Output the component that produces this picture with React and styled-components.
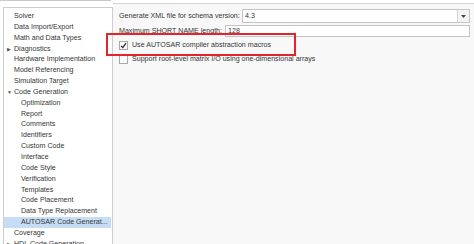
import React from "react";
import styled, { createGlobalStyle } from "styled-components";

const Global = createGlobalStyle`
  html, body { margin: 0; padding: 0; background: #ffffff; }
  body { font-family: "Liberation Sans", Arial, sans-serif; font-size: 7.1px; color: #363636; }
  * { box-sizing: border-box; }
`;

const Page = styled.div`
  position: relative;
  display: flex;
  width: 474px;
  height: 244px;
  overflow: hidden;
`;

const Sidebar = styled.div`
  width: 113px;
  flex: none;
  display: flex;
  flex-direction: column;
`;

const SearchStub = styled.div`
  height: 4px;
  width: 111px;
  border-bottom: 1px solid #c9c9c9;
  border-right: 1px solid #c9c9c9;
`;

const Tree = styled.div`
  margin: 6px 0 0 3px;
  flex: 1;
  background: #ffffff;
  border: 1px solid #cdcdcd;
  border-bottom: none;
  padding-top: 3px;
`;

const Item = styled.div`
  height: 10.85px;
  line-height: 10.85px;
  white-space: nowrap;
  overflow: hidden;
  padding-left: ${(p) => (p.$level === 1 ? 17 : 10)}px;
  margin-right: 1px;
  background: ${(p) => (p.$selected ? "#c6ddf5" : "transparent")};
  position: relative;
`;

const Arrow = styled.span`
  position: absolute;
  left: 3px;
  top: 0;
  font-size: 5px;
  color: #555;
`;

const Content = styled.div`
  flex: 1;
  margin-top: 3px;
  border-top: 1px solid #d2d2d2;
  background: #f8f8f8;
  padding: 5px 4px 0 6px;
  display: flex;
  flex-direction: column;
`;

const FieldRow = styled.div`
  display: flex;
  align-items: center;
  height: ${(p) => p.$h}px;
  margin-bottom: ${(p) => p.$mb || 0}px;
  white-space: nowrap;
`;

const Label = styled.span`
  width: ${(p) => p.$w}px;
  flex: none;
`;

const Box = styled.div`
  flex: 1;
  height: 100%;
  background: #ffffff;
  border: 1px solid #c4c4c4;
  display: flex;
  align-items: center;
  padding-left: 2px;
`;

const BoxValue = styled.span`
  flex: 1;
`;

const DropButton = styled.div`
  width: 12px;
  height: 100%;
  border-left: 1px solid #d6d6d6;
  display: flex;
  align-items: center;
  justify-content: center;
  background: #f4f4f4;
`;

const CheckRow = styled.div`
  display: flex;
  align-items: center;
  height: 14px;
  white-space: nowrap;
`;

const CheckBox = styled.div`
  width: 9px;
  height: 9px;
  border: 1px solid #a9a9a9;
  background: #fbfbfb;
  margin-right: 4px;
  display: flex;
  align-items: center;
  justify-content: center;
`;

const Highlight = styled.div`
  position: absolute;
  left: 106px;
  top: 33px;
  width: 190px;
  height: 23px;
  border: 2px solid #e3252b;
  pointer-events: none;
`;

const treeItems = [
  { t: "Solver" },
  { t: "Data Import/Export" },
  { t: "Math and Data Types" },
  { t: "Diagnostics", arrow: "▶" },
  { t: "Hardware Implementation" },
  { t: "Model Referencing" },
  { t: "Simulation Target" },
  { t: "Code Generation", arrow: "▼" },
  { t: "Optimization", l: 1 },
  { t: "Report", l: 1 },
  { t: "Comments", l: 1 },
  { t: "Identifiers", l: 1 },
  { t: "Custom Code", l: 1 },
  { t: "Interface", l: 1 },
  { t: "Code Style", l: 1 },
  { t: "Verification", l: 1 },
  { t: "Templates", l: 1 },
  { t: "Code Placement", l: 1 },
  { t: "Data Type Replacement", l: 1 },
  { t: "AUTOSAR Code Generat...", l: 1, sel: true },
  { t: "Coverage" },
  { t: "HDL Code Generation", arrow: "▶" },
];

export default function App() {
  return (
    <Page>
      <Global />
      <Sidebar>
        <SearchStub />
        <Tree>
          {treeItems.map((it) => (
            <Item key={it.t} $level={it.l} $selected={it.sel}>
              {it.arrow && <Arrow>{it.arrow}</Arrow>}
              {it.t}
            </Item>
          ))}
        </Tree>
      </Sidebar>
      <Content>
        <FieldRow $h={14} $mb={2}>
          <Label $w={123}>Generate XML file for schema version:</Label>
          <Box>
            <BoxValue>4.3</BoxValue>
            <DropButton>
              <svg width="5" height="3" viewBox="0 0 5 3">
                <path d="M0 0 H5 L2.5 3 Z" fill="#444" />
              </svg>
            </DropButton>
          </Box>
        </FieldRow>
        <FieldRow $h={12} $mb={1}>
          <Label $w={106}>Maximum SHORT NAME length:</Label>
          <Box>
            <BoxValue>128</BoxValue>
          </Box>
        </FieldRow>
        <CheckRow>
          <CheckBox>
            <svg width="7" height="7" viewBox="0 0 7 7">
              <path d="M1 3.8 L2.8 5.6 L6 1.2" fill="none" stroke="#222" strokeWidth="1.2" />
            </svg>
          </CheckBox>
          Use AUTOSAR compiler abstraction macros
        </CheckRow>
        <CheckRow>
          <CheckBox />
          Support root-level matrix I/O using one-dimensional arrays
        </CheckRow>
      </Content>
      <Highlight />
    </Page>
  );
}
